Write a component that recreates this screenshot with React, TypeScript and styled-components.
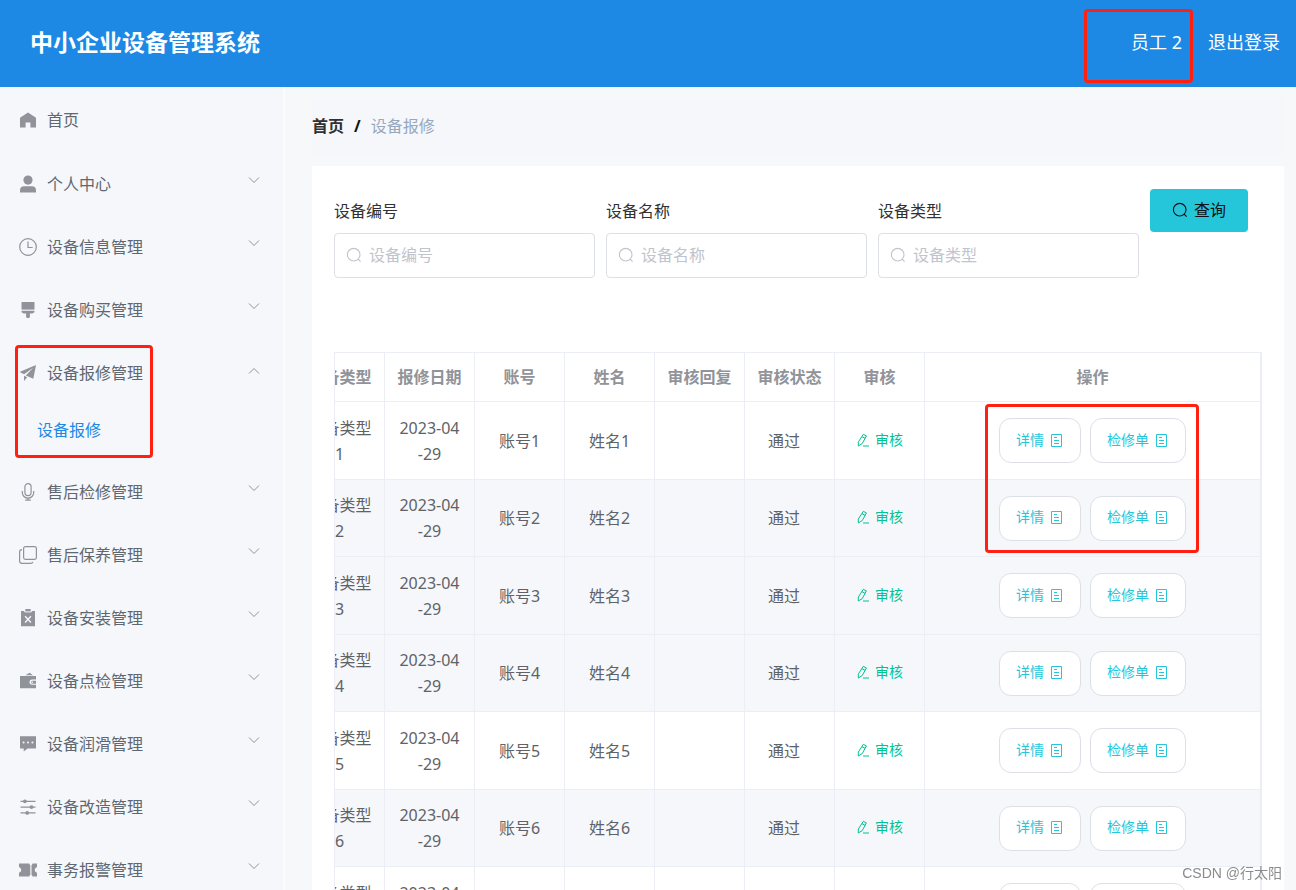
import React from "react";
import styled, { createGlobalStyle, css } from "styled-components";

const GlobalStyle = createGlobalStyle`
  *, *::before, *::after { box-sizing: border-box; }
  html, body { margin: 0; padding: 0; }
  body {
    font-family: "Noto Sans", "Noto Sans CJK SC", sans-serif;
    font-size: 16px;
    color: #606266;
    background: #f7f8fa;
  }
  button, input { font-family: inherit; }
`;

const Page = styled.div`
  height: 100vh;
  display: flex;
  flex-direction: column;
  overflow: hidden;
`;

const Header = styled.header`
  position: relative;
  flex: none;
  height: 87px;
  padding: 0 16px 3px 30px;
  display: flex;
  align-items: center;
  justify-content: space-between;
  background: #1e88e5;
  color: #fff;
`;

const Title = styled.h1`
  margin: 0;
  font-size: 23px;
  line-height: 32px;
  font-weight: 700;
  white-space: nowrap;
`;

const UserNav = styled.nav`
  display: flex;
  align-items: center;
  gap: 26px;
  font-size: 18px;
  line-height: 26px;
  white-space: nowrap;
`;

const Logout = styled.a`
  color: inherit;
  text-decoration: none;
`;

const Body = styled.div`
  flex: 1;
  min-height: 0;
  display: flex;
`;

const Sidebar = styled.aside`
  flex: none;
  width: 285px;
  overflow: hidden;
  background: #f5f7fb;
  border-right: 2px solid #fcfcfd;
`;

const MenuGroup = styled.div`
  position: relative;
`;

const MenuItem = styled.button<{ $first?: boolean }>`
  width: 100%;
  height: ${(p) => (p.$first ? 65 : 63)}px;
  padding: 0 23px 0 19px;
  display: flex;
  align-items: center;
  border: 0;
  background: none;
  color: #5f6870;
  font-size: 16px;
  line-height: 24px;
  text-align: left;
  cursor: pointer;
`;

const MenuIcon = styled.svg`
  flex: none;
  width: 18px;
  height: 18px;
  margin-right: 10px;
  color: #909399;
`;

const MenuText = styled.span`
  flex: 1;
`;

const Chevron = styled.svg<{ $open?: boolean }>`
  flex: none;
  width: 12px;
  height: 12px;
  margin-bottom: ${(p) => (p.$open ? 4 : 8)}px;
  color: #909399;
  ${(p) => p.$open && css`transform: rotate(180deg);`}
`;

const SubItem = styled.a`
  display: block;
  height: 56px;
  padding-left: 37px;
  line-height: 52px;
  color: #1e88e5;
  text-decoration: none;
`;

const Main = styled.main`
  flex: 1;
  min-width: 0;
  padding: 11px 12px 0 27px;
  display: flex;
  flex-direction: column;
  gap: 11px;
  overflow-y: auto;
  scrollbar-width: none;
`;

const Breadcrumb = styled.nav`
  flex: none;
  height: 57px;
  padding-bottom: 2px;
  display: flex;
  align-items: center;
  border-radius: 4px;
  background: #f5f7fb;
  color: #97a8be;
  line-height: 24px;
`;

const Crumb = styled.a`
  color: #303133;
  font-weight: 700;
  text-decoration: none;
`;

const Slash = styled.span`
  margin: 0 10px;
  color: #111;
  font-weight: 700;
`;

const Card = styled.section`
  flex: none;
  padding: 23px 22px;
  background: #fff;
`;

const SearchForm = styled.form`
  display: flex;
  align-items: flex-start;
  gap: 11px;
  margin-bottom: 74px;
`;

const Field = styled.div`
  flex: 0 1 261px;
  min-width: 0;
`;

const Label = styled.label`
  display: block;
  line-height: 44px;
  color: #303133;
`;

const InputBox = styled.div`
  height: 45px;
  padding: 0 11px 2px;
  display: flex;
  align-items: center;
  gap: 7px;
  border: 1px solid #dcdfe6;
  border-radius: 4px;
  background: #fff;
  color: #c0c4cc;
`;

const TextInput = styled.input`
  flex: 1;
  min-width: 0;
  padding: 0;
  border: 0;
  outline: 0;
  background: none;
  font-size: 16px;
  line-height: 24px;
  color: #606266;
  &::placeholder { color: #c0c4cc; opacity: 1; }
`;

const SmallIcon = styled.svg<{ $size: number }>`
  flex: none;
  width: ${(p) => p.$size}px;
  height: ${(p) => p.$size}px;
`;

const QueryButton = styled.button`
  flex: none;
  height: 43px;
  padding: 0 22px 2px;
  display: flex;
  align-items: center;
  gap: 6px;
  border: 0;
  border-radius: 4px;
  background: #26c6da;
  color: #111;
  font-size: 16px;
  line-height: 24px;
  cursor: pointer;
`;

const TableWrap = styled.div`
  position: relative;
  border: 1px solid #ebeef5;
  border-right-width: 2px;
`;

const TableScroll = styled.div`
  overflow: hidden;
`;

const Table = styled.table`
  width: calc(100% + 40px);
  margin-left: -40px;
  table-layout: fixed;
  border-collapse: separate;
  border-spacing: 0;
  text-align: center;
`;

const Th = styled.th<{ $wide?: boolean }>`
  width: ${(p) => (p.$wide ? "auto" : "90px")};
  height: 49px;
  padding: 0;
  border-bottom: 1px solid #ebeef5;
  border-right: ${(p) => (p.$wide ? "0" : "1px solid #ebeef5")};
  color: #909399;
  font-weight: 700;
  line-height: 26px;
`;

const Row = styled.tr<{ $shaded: boolean }>`
  height: 77px;
  background: ${(p) => (p.$shaded ? "#f5f7fb" : "#fff")};
  &:nth-child(odd) { height: 78px; }
`;

const Td = styled.td`
  padding: 0;
  border-bottom: 1px solid #ebeef5;
  border-right: 1px solid #ebeef5;
  line-height: 26px;
  &:last-child { border-right: 0; }
`;

const StatusTd = styled(Td)`
  padding-right: 11px;
`;

const AuditButton = styled.button`
  margin: 0 auto;
  padding: 0 0 2px;
  display: flex;
  align-items: center;
  gap: 5px;
  border: 0;
  background: none;
  color: #00c292;
  font-size: 14px;
  line-height: 20px;
  cursor: pointer;
`;

const Actions = styled.div`
  display: flex;
  justify-content: center;
  gap: 9px;
`;

const ActionButton = styled.button`
  height: 45px;
  padding: 0 16px 2px;
  display: flex;
  align-items: center;
  gap: 6px;
  border: 1px solid #dcdfe6;
  border-radius: 12px;
  background: #fff;
  color: #26c6da;
  font-size: 14px;
  line-height: 20px;
  cursor: pointer;
`;

const Mark = styled.div`
  position: absolute;
  border: 3px solid #ff2012;
  border-radius: 4px;
  pointer-events: none;
`;

const UserMark = styled(Mark)`
  top: 9px;
  right: 103px;
  width: 109px;
  height: 74px;
`;

const MenuMark = styled(Mark)`
  top: 4px;
  left: 15px;
  width: 138px;
  height: 113px;
`;

const ActionMark = styled(Mark)`
  top: 51px;
  right: 61px;
  width: 214px;
  height: 149px;
`;

const Watermark = styled.div`
  position: fixed;
  right: 14px;
  bottom: 6px;
  font-family: "Liberation Sans", "Noto Sans CJK SC", sans-serif;
  font-size: 14px;
  line-height: 22px;
  color: #8b8b8e;
`;

const line = { fill: "none", stroke: "currentColor", strokeWidth: 1.2 } as const;
const PALE = "#f5f7fb";

const icons: Record<string, React.ReactNode> = {
  home: <path fill="currentColor" d="M1 6.8 9 1.4l8 5.4v9.7h-5.6v-5.1H6.6v5.1H1z" />,
  user: (
    <g fill="currentColor">
      <circle cx="9" cy="5.1" r="4.6" />
      <path d="M1 17.6v-2.4c0-2.4 1.5-3.9 4-3.9h8c2.5 0 4 1.5 4 3.9v2.4z" />
    </g>
  ),
  clock: (
    <g {...line}>
      <circle cx="9" cy="9" r="8.3" />
      <path d="M9 3.5V9.5h4.7" />
    </g>
  ),
  brush: (
    <g fill="currentColor">
      <path d="M2.5 1h13v7.6h-13z" />
      <path d="M2.5 9.7h13c0 1.9-1 2.7-2.7 2.7h-1.900V15.500c0 1-.8 1.600-1.900 1.600s-1.900-.6-1.900-1.600v-3.100H5.200c-1.700 0-2.700-.8-2.700-2.700z" />
    </g>
  ),
  plane: (
    <g fill="currentColor">
      <path d="M17 1 .5 8l4.600 2.300L14.200 3.700 6.800 11.400 14.300 14.800z" />
      <path d="M5 11.700v5.300l3.200-3.700z" />
    </g>
  ),
  mic: (
    <g {...line}>
      <rect x="5.9" y=".7" width="6.2" height="12" rx="3.1" />
      <path d="M3.300 8v1.500a5.700 5.700 0 0 0 11.400 0V8M9 15.200v2M6.200 17.200h5.600" />
    </g>
  ),
  copy: (
    <g {...line}>
      <rect x="4.6" y=".6" width="12.8" height="12.8" rx="1.8" />
      <path d="M3 3.600C1.300 3.700.6 4.400.6 6v9c0 1.600.8 2.400 2.400 2.400h8.500c1.400 0 2.100-.5 2.300-1.600" />
    </g>
  ),
  clipboard: (
    <g>
      <path fill="currentColor" d="M2 2h14v15.200H2zM6.300 0h5.400v2H6.300z" />
      <path fill="none" stroke={PALE} strokeWidth="1" d="M5.700 1v1.900h6.600V1" />
      <path fill="none" stroke={PALE} strokeWidth="1.4" d="m6.100 7.200 5.800 6.200M11.900 7.200l-5.800 6.200" />
    </g>
  ),
  wallet: (
    <g>
      <path fill="currentColor" d="M1 4h16v12.300H1zM6.500 3.300 10.600.8l3.400 2.500z" />
      <path fill={PALE} d="M17 7.400h-3.800a2.700 2.700 0 0 0 0 5.400H17z" />
      <path fill="currentColor" d="M18 8.700h-4.500a1.500 1.500 0 0 0 0 3H17v1h1z" />
      <circle cx="13.300" cy="10.200" r=".8" fill={PALE} />
      <path fill={PALE} d="M17 7h1v7h-1z" />
    </g>
  ),
  comment: (
    <g>
      <path fill="currentColor" d="M1 1.200h16v12.400H8.700l-4 3v-3H1z" />
      <g fill={PALE}>
        <circle cx="4.600" cy="7.400" r="1" />
        <circle cx="9" cy="7.400" r="1" />
        <circle cx="13.400" cy="7.400" r="1" />
      </g>
    </g>
  ),
  sliders: (
    <g>
      <path {...line} d="M1.500 3.300h15M1.500 9.100h15M1.500 14.900h15" />
      <g fill="currentColor">
        <circle cx="5.900" cy="3.300" r="1.900" />
        <circle cx="12.500" cy="9.100" r="1.900" />
        <circle cx="8.200" cy="14.900" r="1.900" />
      </g>
    </g>
  ),
  ticket: (
    <g fill="currentColor">
      <path d="M0 2.500h10.300c.1.900.4 1.300 1 1.600v9.800c-.6.300-.9.700-1 1.600H0v-3.800c1.400-.3 2.200-1.300 2.200-2.700S1.400 6.600 0 6.300z" />
      <path d="M12.500 4.100c.6-.3.900-.7 1-1.600H18v3.800c-1.400.3-2.200 1.300-2.200 2.700s.8 2.400 2.200 2.700v3.800h-4.500c-.1-.9-.4-1.300-1-1.600z" />
    </g>
  ),
};

const SearchIcon = () => (
  <SmallIcon $size={16} viewBox="0 0 16 16" aria-hidden="true">
    <g fill="none" stroke="currentColor" strokeWidth="1.1">
      <circle cx="7.700" cy="7.700" r="6.300" />
      <path d="m12.100 12.200 2.500 2.500" />
    </g>
  </SmallIcon>
);

const EditIcon = () => (
  <SmallIcon $size={14} viewBox="0 0 14 14" aria-hidden="true">
    <g fill="none" stroke="currentColor" strokeWidth="1" strokeLinejoin="round">
      <path d="M7.300 1.300 10.400 2.900 6.300 10.500 2.300 13 2.300 9.100zM6 3.700l3.100 1.700M7 13h6" />
    </g>
  </SmallIcon>
);

const DocIcon = () => (
  <SmallIcon $size={14} viewBox="0 0 14 14" aria-hidden="true">
    <g fill="none" stroke="currentColor" strokeWidth="1">
      <path d="M1.500 1.500h10v12h-10zM4 4.500h3M4 7.500h5M4 10.500h5" />
    </g>
  </SmallIcon>
);

interface MenuEntry {
  icon: string;
  text: string;
  child?: string;
}

const menu: MenuEntry[] = [
  { icon: "user", text: "个人中心" },
  { icon: "clock", text: "设备信息管理" },
  { icon: "brush", text: "设备购买管理" },
  { icon: "plane", text: "设备报修管理", child: "设备报修" },
  { icon: "mic", text: "售后检修管理" },
  { icon: "copy", text: "售后保养管理" },
  { icon: "clipboard", text: "设备安装管理" },
  { icon: "wallet", text: "设备点检管理" },
  { icon: "comment", text: "设备润滑管理" },
  { icon: "sliders", text: "设备改造管理" },
  { icon: "ticket", text: "事务报警管理" },
];

const fields = [
  { id: "code", text: "设备编号" },
  { id: "name", text: "设备名称" },
  { id: "type", text: "设备类型" },
];

const columns = ["设备类型", "报修日期", "账号", "姓名", "审核回复", "审核状态", "审核"];
const rows = [1, 2, 3, 4, 5, 6, 7];
const highlightedRow = 3;

export default function App() {
  return (
    <Page>
      <GlobalStyle />
      <Header>
        <Title>中小企业设备管理系统</Title>
        <UserNav>
          <span>员工 2</span>
          <Logout href="#logout">退出登录</Logout>
        </UserNav>
        <UserMark />
      </Header>
      <Body>
        <Sidebar>
          <MenuItem type="button" $first>
            <MenuIcon viewBox="0 0 18 18" aria-hidden="true">{icons.home}</MenuIcon>
            <MenuText>首页</MenuText>
          </MenuItem>
          {menu.map((m) => (
            <MenuGroup key={m.text}>
              <MenuItem type="button" aria-expanded={Boolean(m.child)}>
                <MenuIcon viewBox="0 0 18 18" aria-hidden="true">{icons[m.icon]}</MenuIcon>
                <MenuText>{m.text}</MenuText>
                <Chevron $open={Boolean(m.child)} viewBox="0 0 12 12" aria-hidden="true">
                  <path d="m1 3.500 5 5 5-5" fill="none" stroke="currentColor" />
                </Chevron>
              </MenuItem>
              {m.child && <SubItem href="#repair">{m.child}</SubItem>}
              {m.child && <MenuMark />}
            </MenuGroup>
          ))}
        </Sidebar>
        <Main>
          <Breadcrumb>
            <Crumb href="#home">首页</Crumb>
            <Slash>/</Slash>
            <span>设备报修</span>
          </Breadcrumb>
          <Card>
            <SearchForm onSubmit={(e) => e.preventDefault()}>
              {fields.map((f) => (
                <Field key={f.id}>
                  <Label htmlFor={f.id}>{f.text}</Label>
                  <InputBox>
                    <SearchIcon />
                    <TextInput id={f.id} placeholder={f.text} />
                  </InputBox>
                </Field>
              ))}
              <QueryButton type="submit">
                <SearchIcon />
                查询
              </QueryButton>
            </SearchForm>
            <TableWrap>
              <TableScroll>
                <Table>
                  <thead>
                    <tr>
                      {columns.map((c) => (
                        <Th key={c}>{c}</Th>
                      ))}
                      <Th $wide>操作</Th>
                    </tr>
                  </thead>
                  <tbody>
                    {rows.map((n) => (
                      <Row key={n} $shaded={n % 2 === 0 || n === highlightedRow}>
                        <Td>
                          设备类型
                          <br />
                          {n}
                        </Td>
                        <Td>
                          2023-04
                          <br />
                          -29
                        </Td>
                        <Td>账号{n}</Td>
                        <Td>姓名{n}</Td>
                        <Td />
                        <StatusTd>通过</StatusTd>
                        <Td>
                          <AuditButton type="button">
                            <EditIcon />
                            审核
                          </AuditButton>
                        </Td>
                        <Td>
                          <Actions>
                            <ActionButton type="button">
                              详情
                              <DocIcon />
                            </ActionButton>
                            <ActionButton type="button">
                              检修单
                              <DocIcon />
                            </ActionButton>
                          </Actions>
                        </Td>
                      </Row>
                    ))}
                  </tbody>
                </Table>
              </TableScroll>
              <ActionMark />
            </TableWrap>
          </Card>
        </Main>
      </Body>
      <Watermark>CSDN @行太阳</Watermark>
    </Page>
  );
}
